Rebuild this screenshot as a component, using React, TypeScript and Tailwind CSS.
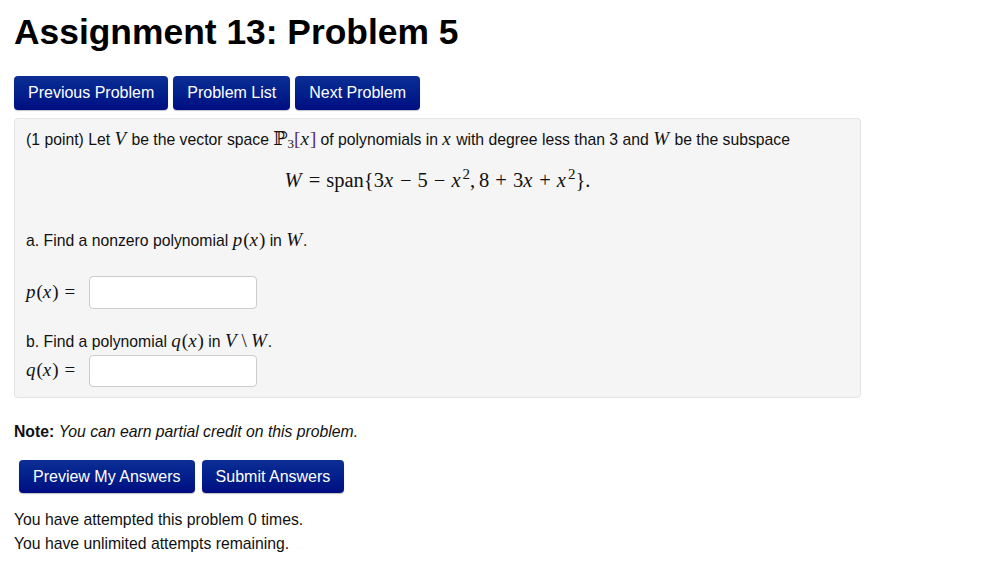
import React from "react";

const btn =
  "rounded-[4px] bg-gradient-to-b from-[#0c2e94] to-[#000c82] px-[14px] text-[16px] text-white shadow-[0_1px_1px_rgba(0,0,0,0.25)]";

function M({ children }: { children: React.ReactNode }) {
  return (
    <span className="font-['Liberation_Serif','DejaVu_Serif',serif] text-[19px] leading-none">
      {children}
    </span>
  );
}

function I({ children }: { children: React.ReactNode }) {
  return <i className="pr-[1px]">{children}</i>;
}

function Op({ children }: { children: React.ReactNode }) {
  return <span className="mx-[6px]">{children}</span>;
}

function Sq() {
  return <sup className="-top-[8px] ml-[1px] text-[15px]">2</sup>;
}

export default function App() {
  return (
    <div className="min-h-[583px] bg-white px-[14px] font-['Liberation_Sans',Arial,sans-serif] text-[15.75px] leading-[24px] text-[#111]">
      <h1 className="pt-[11px] text-[35.4px] font-bold leading-[43px] text-black">
        Assignment 13: Problem 5
      </h1>

      <div className="mt-[22px] flex gap-[5px]">
        <button className={btn + " h-[34px]"}>Previous Problem</button>
        <button className={btn + " h-[34px]"}>Problem List</button>
        <button className={btn + " h-[34px]"}>Next Problem</button>
      </div>

      <div className="mt-[8px] w-[847px] rounded-[4px] border border-[#e3e3e3] bg-[#f5f5f5] px-[11px] pb-[10px] pt-[9px]">
        <div className="h-[24px] whitespace-nowrap">
          (1 point) Let{" "}
          <M>
            <I>V</I>
          </M>{" "}
          be the vector space{" "}
          <M>
            ℙ<sub className="text-[13px]">3</sub>
            <span className="text-[#5b2a6e]">[</span>
            <I>x</I>
            <span className="text-[#5b2a6e]">]</span>
          </M>{" "}
          of polynomials in{" "}
          <M>
            <I>x</I>
          </M>{" "}
          with degree less than 3 and{" "}
          <M>
            <I>W</I>
          </M>{" "}
          be the subspace
        </div>

        <div className="mt-[16px] flex h-[24px] items-center justify-center">
          <span className="font-['Liberation_Serif','DejaVu_Serif',serif] text-[20.5px] leading-none">
            <I>W</I>
            <Op>=</Op>span{"{"}3<I>x</I>
            <Op>−</Op>5<Op>−</Op>
            <I>x</I>
            <Sq />
            <span className="mr-[4px]">,</span>8<Op>+</Op>3<I>x</I>
            <Op>+</Op>
            <I>x</I>
            <Sq />
            {"}"}.
          </span>
        </div>

        <div className="mt-[37px] h-[24px]">
          a. Find a nonzero polynomial{" "}
          <M>
            <I>p</I>(<I>x</I>)
          </M>{" "}
          in{" "}
          <M>
            <I>W</I>
          </M>
          .
        </div>

        <div className="mt-[23px] flex items-center">
          <span className="w-[63px]">
            <M>
              <I>p</I>(<I>x</I>)<Op>=</Op>
            </M>
          </span>
          <input className="h-[33px] w-[168px] rounded-[4px] border border-[#cccccc] bg-white" />
        </div>

        <div className="mt-[21px] h-[24px]">
          b. Find a polynomial{" "}
          <M>
            <I>q</I>(<I>x</I>)
          </M>{" "}
          in{" "}
          <M>
            <I>V</I>
            <span className="mx-[4px]">\</span>
            <I>W</I>
          </M>
          .
        </div>

        <div className="mt-[1px] flex items-center">
          <span className="w-[63px]">
            <M>
              <I>q</I>(<I>x</I>)<Op>=</Op>
            </M>
          </span>
          <input className="h-[32px] w-[168px] rounded-[4px] border border-[#cccccc] bg-white" />
        </div>
      </div>

      <div className="mt-[22px]">
        <b>Note:</b> <i>You can earn partial credit on this problem.</i>
      </div>

      <div className="ml-[5px] mt-[16px] flex gap-[7px]">
        <button className={btn + " h-[33px]"}>Preview My Answers</button>
        <button className={btn + " h-[33px]"}>Submit Answers</button>
      </div>

      <div className="mt-[15px]">
        You have attempted this problem 0 times.
        <br />
        You have unlimited attempts remaining.
      </div>
    </div>
  );
}
